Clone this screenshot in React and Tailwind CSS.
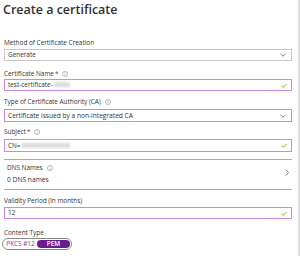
import React from "react";

const Info = () => (
  <svg width="6" height="6" viewBox="0 0 12 12" className="inline-block ml-[4px] align-[-0.5px]">
    <circle cx="6" cy="6" r="5.2" fill="none" stroke="#8a8886" strokeWidth="1.1" />
    <line x1="6" y1="5.2" x2="6" y2="9" stroke="#8a8886" strokeWidth="1.2" />
    <circle cx="6" cy="3.4" r="0.8" fill="#8a8886" />
  </svg>
);

const ChevronDown = () => (
  <svg width="6" height="4" viewBox="0 0 12 8">
    <polyline points="1,1.5 6,6.5 11,1.5" fill="none" stroke="#605e5c" strokeWidth="1.6" />
  </svg>
);

const Check = () => (
  <svg width="6" height="5" viewBox="0 0 12 10">
    <polyline points="1,5.5 4.5,9 11,1.5" fill="none" stroke="#6bb700" strokeWidth="1.8" />
  </svg>
);

const Blur = ({ w }) => (
  <span className="inline-block h-[5px] bg-[#dcdcdc] blur-[1px] ml-[1px] align-middle" style={{ width: w }} />
);

const Label = ({ children, className = "" }) => (
  <div className={"h-[8px] leading-[8px] text-[6.4px] text-[#323130] " + className}>{children}</div>
);

const Req = () => <span className="text-[#a4262c] ml-[1px]">*</span>;

export default function App() {
  return (
    <div
      className="w-[300px] h-[256px] bg-white border-r-[2px] border-[#e3e3e3] overflow-hidden"
      style={{ fontFamily: '"Segoe UI", "Open Sans", "Liberation Sans", sans-serif' }}
    >
      <div className="pl-[4px] pr-[4px]">
        <div className="mt-[3px] h-[14px] leading-[14px] text-[12.5px] font-semibold text-[#323130] -ml-[1px]">
          Create a certificate
        </div>

        <Label className="mt-[22px]">Method of Certificate Creation</Label>
        <div className="mt-[2px] h-[12px] w-[288px] border border-[#c8c6c4] flex items-center justify-between pl-[3px] pr-[5px] text-[6.4px] text-[#323130]">
          <span>Generate</span>
          <ChevronDown />
        </div>

        <Label className="mt-[9px]">
          Certificate Name<Req />
          <Info />
        </Label>
        <div className="mt-[1px] h-[12px] w-[288px] border border-[#cf86e3] flex items-center justify-between pl-[3px] pr-[4px] text-[6.4px] text-[#323130]">
          <span className="flex items-center">
            test-certificate-
            <Blur w="16px" />
          </span>
          <Check />
        </div>

        <Label className="mt-[7px]">
          Type of Certificate Authority (CA)
          <Info />
        </Label>
        <div className="mt-[3px] h-[13px] w-[288px] border border-[#cf86e3] flex items-center justify-between pl-[3px] pr-[5px] text-[6.6px] text-[#323130]">
          <span>Certificate issued by a non-integrated CA</span>
          <ChevronDown />
        </div>

        <Label className="mt-[6px]">
          Subject<Req />
          <Info />
        </Label>
        <div className="mt-[3px] h-[13px] w-[288px] border border-[#cf86e3] flex items-center justify-between pl-[3px] pr-[4px] text-[6.4px] text-[#323130]">
          <span className="flex items-center">
            CN=
            <Blur w="48px" />
          </span>
          <Check />
        </div>

        <div className="mt-[7px] w-[288px] h-[1px] bg-[#a8a8a8]" />
        <div className="w-[288px] flex items-center justify-between pl-[3px] pr-[3px]">
          <div>
            <Label className="mt-[4px]">
              DNS Names
              <Info />
            </Label>
            <Label className="mt-[4px] !text-[6.7px]">0 DNS names</Label>
          </div>
          <svg width="4" height="7" viewBox="0 0 8 14">
            <polyline points="1.5,1 7,7 1.5,13" fill="none" stroke="#605e5c" strokeWidth="1.5" />
          </svg>
        </div>
        <div className="mt-[5px] w-[288px] h-[1px] bg-[#a8a8a8]" />

        <Label className="mt-[7px]">Validity Period (in months)</Label>
        <div className="mt-[2px] h-[12px] w-[288px] border border-[#cf86e3] flex items-center justify-between pl-[3px] pr-[4px] text-[6.4px] text-[#323130]">
          <span>12</span>
          <Check />
        </div>

        <Label className="mt-[10px]">Content Type</Label>
        <div className="mt-[1px] h-[12px] w-[70px] rounded-full border border-[#8a8886] flex items-center p-[1px] -ml-[2px]">
          <div className="flex-1 text-center text-[6.4px] font-medium text-[#8a35ad] leading-[8px]">PKCS #12</div>
          <div className="w-[33px] h-full rounded-full bg-[#6b1e8a] text-white text-[6.4px] font-semibold flex items-center justify-center">
            PEM
          </div>
        </div>
      </div>
    </div>
  );
}
